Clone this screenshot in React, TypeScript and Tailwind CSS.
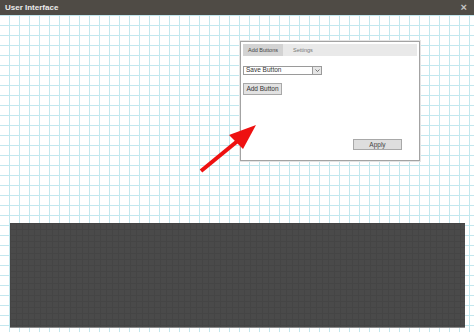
import React from "react";

export default function App() {
  return (
    <div className="w-[474px] h-[332px] overflow-hidden bg-white font-['Liberation_Sans',Arial,sans-serif]">
      {/* title bar */}
      <div className="h-[15px] bg-[#4f4b45] flex items-center justify-between pl-[5px] pr-[7px]">
        <span className="text-[8px] font-bold text-[#ececec] leading-none">User Interface</span>
        <span className="text-[11px] font-bold text-[#c4c4c4] leading-none">×</span>
      </div>

      {/* canvas */}
      <div className="relative h-[317px] pt-[208px] pl-[10px] bg-[linear-gradient(to_right,#c2e7ee_1px,transparent_1px),linear-gradient(to_bottom,#c2e7ee_1px,transparent_1px)] bg-[size:10px_10px] bg-[position:9px_0px]">
        {/* dialog */}
        <div className="absolute left-[240px] top-[26px] w-[180px] h-[120px] bg-white border border-[#a3a3a3] shadow-[0_0_0_1px_#e4e4e4] p-[2px]">
          <div className="h-[12px] bg-[#e9e9e9] flex items-stretch">
            <div className="w-[40px] bg-[#d3d3d3] flex items-center justify-center text-[5.5px] text-[#444]">Add Buttons</div>
            <div className="pl-[10px] flex items-center text-[5.5px] text-[#777]">Settings</div>
          </div>
          <div className="mt-[10px] w-[79px] h-[9px] border border-[#9a9a9a] flex items-center">
            <span className="flex-1 pl-[2px] text-[6.5px] text-[#333] leading-none">Save Button</span>
            <span className="w-[9px] h-full border-l border-[#9a9a9a] bg-[#e6e6e6] flex items-center justify-center">
              <svg width="5" height="3" viewBox="0 0 5 3">
                <path d="M0.5 0.5 L2.5 2.5 L4.5 0.5" fill="none" stroke="#555" strokeWidth="0.8" />
              </svg>
            </span>
          </div>
          <div className="mt-[8px] w-[39px] h-[12px] bg-[#e2e2e2] border border-[#a8a8a8] flex items-center justify-center text-[6.5px] text-[#333]">
            Add Button
          </div>
          <div className="mt-[44px] ml-[110px] w-[49px] h-[11px] bg-[#dedede] border border-[#a8a8a8] flex items-center justify-center text-[6.5px] text-[#444]">
            Apply
          </div>
        </div>

        {/* arrow */}
        <svg className="absolute left-0 top-0" width="474" height="317" viewBox="0 15 474 317">
          <line x1="201" y1="171" x2="240" y2="139" stroke="#ee1111" strokeWidth="4" strokeLinecap="butt" />
          <polygon points="256,125 229,135 243,149" fill="#ee1111" />
        </svg>

        {/* dark panel */}
        <div className="w-[455px] h-[105px] bg-[#4a4a4a] border-b border-[#8a8a8a] bg-[linear-gradient(to_right,#454545_1px,transparent_1px),linear-gradient(to_bottom,#454545_1px,transparent_1px)] bg-[size:6px_6px]" />
      </div>
    </div>
  );
}
